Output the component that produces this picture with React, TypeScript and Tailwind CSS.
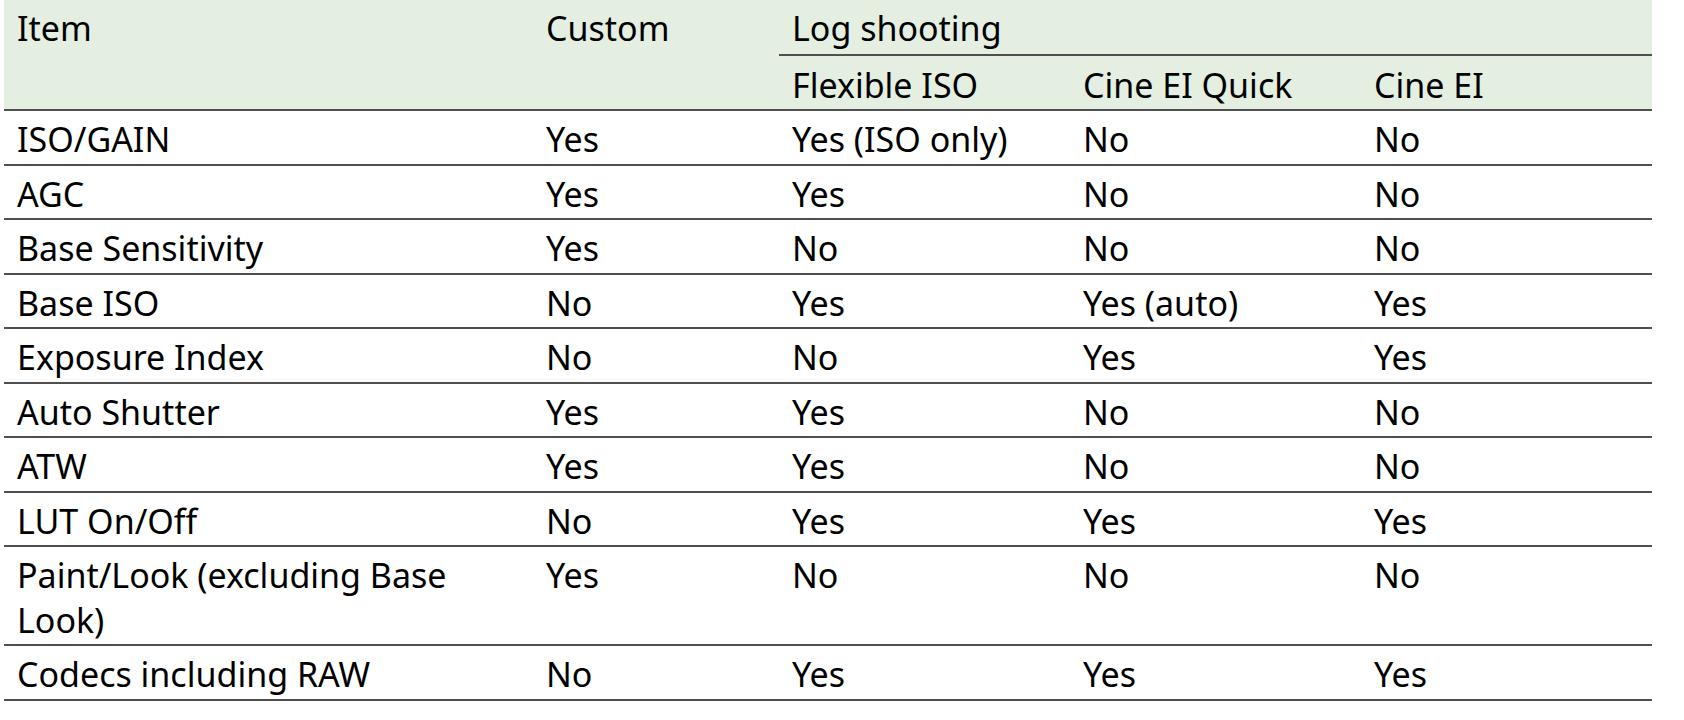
import React from "react";

const rows: [string, string, string, string, string][] = [
  ["ISO/GAIN", "Yes", "Yes (ISO only)", "No", "No"],
  ["AGC", "Yes", "Yes", "No", "No"],
  ["Base Sensitivity", "Yes", "No", "No", "No"],
  ["Base ISO", "No", "Yes", "Yes (auto)", "Yes"],
  ["Exposure Index", "No", "No", "Yes", "Yes"],
  ["Auto Shutter", "Yes", "Yes", "No", "No"],
  ["ATW", "Yes", "Yes", "No", "No"],
  ["LUT On/Off", "No", "Yes", "Yes", "Yes"],
  ["Paint/Look (excluding Base Look)", "Yes", "No", "No", "No"],
  ["Codecs including RAW", "No", "Yes", "Yes", "Yes"],
];

export default function App() {
  const th =
    "text-left font-normal align-top pl-[13px] leading-[45.5px] border-[#4f4f4f] whitespace-nowrap";
  const td =
    "align-top pl-[13px] pt-[6px] pb-[2px] leading-[44.5px] border-b-2 border-[#4f4f4f]";
  return (
    <div className="w-[1684px] h-[720px] bg-white font-['Noto_Sans',sans-serif] text-[34px] text-black">
      <table className="ml-[4px] w-[1648px] table-fixed border-separate border-spacing-0">
        <colgroup>
          <col className="w-[529px]" />
          <col className="w-[246px]" />
          <col className="w-[291px]" />
          <col className="w-[291px]" />
          <col className="w-[291px]" />
        </colgroup>
        <thead className="bg-[#e4efe2]">
          <tr>
            <th rowSpan={2} className={`${th} pt-[6px] border-b-2`}>
              Item
            </th>
            <th rowSpan={2} className={`${th} pt-[6px] border-b-2`}>
              Custom
            </th>
            <th colSpan={3} className={`${th} pt-[6px] pb-[2px] border-b-2`}>
              Log shooting
            </th>
          </tr>
          <tr>
            <th className={`${th} pt-[7px] pb-[1px] border-b-2`}>Flexible ISO</th>
            <th className={`${th} pt-[7px] pb-[1px] border-b-2`}>Cine EI Quick</th>
            <th className={`${th} pt-[7px] pb-[1px] border-b-2`}>Cine EI</th>
          </tr>
        </thead>
        <tbody>
          {rows.map((r) => (
            <tr key={r[0]}>
              <td className={`${td} pr-[60px]`}>{r[0]}</td>
              <td className={td}>{r[1]}</td>
              <td className={td}>{r[2]}</td>
              <td className={td}>{r[3]}</td>
              <td className={td}>{r[4]}</td>
            </tr>
          ))}
        </tbody>
      </table>
    </div>
  );
}
